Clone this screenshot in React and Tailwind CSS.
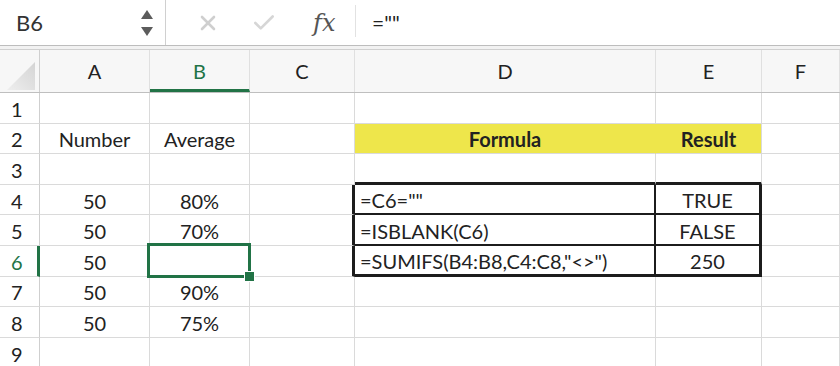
import React from "react";
import { X, Check } from "lucide-react";

const cols = ["w-[110px]", "w-[100px]", "w-[105px]", "w-[301px]", "w-[106px]", "w-[78px]"];
const letters = ["A", "B", "C", "D", "E", "F"];

const GR = "border-r border-r-[#dadada]";
const GB = "border-b border-b-[#dadada]";
const K3R = "border-r-[3px] border-r-[#1c1c1c]";
const K2R = "border-r-2 border-r-[#1c1c1c]";
const K3B = "border-b-[3px] border-b-[#1c1c1c]";
const K2B = "border-b-2 border-b-[#1c1c1c]";

const rows = [
  {},
  { A: "Number", B: "Average", D: "Formula", E: "Result" },
  {},
  { A: "50", B: "80%", D: '=C6=""', E: "TRUE" },
  { A: "50", B: "70%", D: "=ISBLANK(C6)", E: "FALSE" },
  { A: "50", B: "", D: '=SUMIFS(B4:B8,C4:C8,"<>")', E: "250" },
  { A: "50", B: "90%" },
  { A: "50", B: "75%" },
  {},
];

// border classes per cell, keyed "row:col"
const right = {
  "2:D": "border-r border-r-[#eee64b]",
  "4:C": K3R, "5:C": K3R, "6:C": K3R,
  "4:D": K2R, "5:D": K2R, "6:D": K2R,
  "4:E": K3R, "5:E": K3R, "6:E": K3R,
};
const bottom = {
  "3:D": K3B, "3:E": K3B,
  "4:D": K2B, "4:E": K2B, "5:D": K2B, "5:E": K2B,
  "6:D": K3B, "6:E": K3B,
};

function Cell({ r, c, i, value }) {
  const key = r + ":" + c;
  const yellow = r === 2 && (c === "D" || c === "E");
  const align = c === "D" && r !== 2 ? "justify-start pl-[5px]" : "justify-center";
  return (
    <div
      className={`${cols[i]} h-full flex items-center ${align} ${right[key] || GR} ${bottom[key] || GB} ${
        yellow ? "bg-[#eee64b] font-bold" : ""
      } relative`}
    >
      <span className="pt-[2px] whitespace-nowrap">{value}</span>
      {r === 6 && c === "B" && (
        <div className="absolute z-10 -left-[3px] -top-[3px] w-[104px] h-[35px] border-[3px] border-[#217346]">
          <div className="absolute -right-[7px] -bottom-[7px] w-[11px] h-[11px] bg-[#217346] border border-white" />
        </div>
      )}
    </div>
  );
}

export default function App() {
  return (
    <div className="w-[840px] h-[366px] overflow-hidden bg-white text-[#222] font-['Lato','Open_Sans',sans-serif] text-[20px]">
      {/* formula bar */}
      <div className="h-[46px] flex border-b border-b-[#bdbdbd]">
        <div className="w-[166px] flex items-center justify-between pl-[16px] pr-[12px] border-r border-r-[#d0d0d0]">
          <span className="text-[22px] text-[#333]">B6</span>
          <div className="flex flex-col gap-[8px]">
            <svg width="12" height="9" viewBox="0 0 12 9"><polygon points="6,0 12,9 0,9" fill="#5c5c5c" /></svg>
            <svg width="12" height="9" viewBox="0 0 12 9"><polygon points="0,0 12,0 6,9" fill="#5c5c5c" /></svg>
          </div>
        </div>
        <div className="w-[190px] flex items-center pl-[30px] py-[5px]">
          <X size={24} strokeWidth={2.6} color="#cfcfcf" />
          <Check size={26} strokeWidth={2.4} color="#d6d6d6" className="ml-[31px]" />
          <span className="ml-[36px] font-['DejaVu_Serif',serif] italic text-[24px] text-[#555] leading-none">fx</span>
          <div className="ml-auto self-start h-[32px] border-r border-r-[#e2e2e2]" />
        </div>
        <div className="flex items-center pl-[16px] text-[21px] text-[#222]">=""</div>
      </div>
      <div className="h-[3px] bg-[#f2f2f2] border-b border-b-[#d0d0d0] box-content" />

      {/* column headers */}
      <div className="h-[43px] flex bg-[#f7f7f7] border-b border-b-[#bfbfbf]">
        <div className="w-[40px] h-full border-r border-r-[#cfcfcf] relative">
          <svg width="40" height="43" viewBox="0 0 40 43">
            <defs>
              <linearGradient id="cg" x1="0" y1="1" x2="1" y2="0">
                <stop offset="0" stopColor="#eeeeee" />
                <stop offset="1" stopColor="#d4d4d4" />
              </linearGradient>
            </defs>
            <polygon points="7,40 35,40 35,12" fill="url(#cg)" />
          </svg>
        </div>
        {letters.map((l, i) => (
          <div
            key={l}
            className={`${cols[i]} h-full flex items-center justify-center border-r border-r-[#e0e0e0] ${
              l === "B" ? "text-[#217346] border-b-[3px] border-b-[#217346]" : "text-[#222]"
            }`}
          >
            <span className={l === "B" ? "pt-[3px]" : ""}>{l}</span>
          </div>
        ))}
      </div>

      {/* rows */}
      {rows.map((row, ri) => {
        const r = ri + 1;
        return (
          <div key={r} className="h-[30.6px] flex">
            <div
              className={`w-[40px] h-full flex items-center pl-[11px] border-b border-b-[#dadada] ${
                r === 6 ? "text-[#217346] border-r-[3px] border-r-[#217346]" : "border-r border-r-[#cfcfcf]"
              }`}
            >
              <span className="pt-[2px]">{r}</span>
            </div>
            {letters.map((c, i) => (
              <Cell key={c} r={r} c={c} i={i} value={row[c]} />
            ))}
          </div>
        );
      })}
    </div>
  );
}
